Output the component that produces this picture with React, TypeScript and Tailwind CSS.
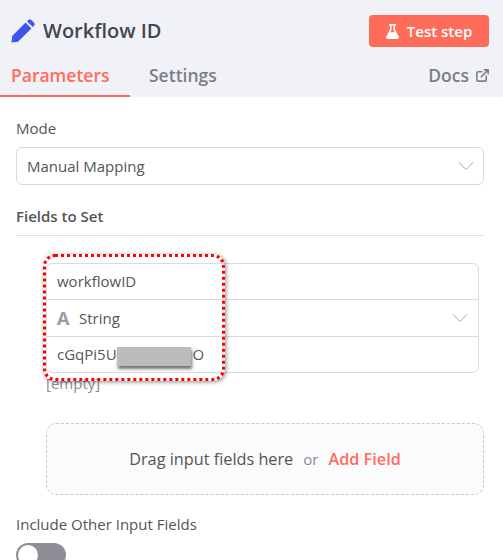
import React from 'react';
import { ChevronDown, ExternalLink } from 'lucide-react';

const PencilIcon = () => (
  <svg viewBox="0 0 24 24" className="w-[24px] h-[24px]" fill="#3f55ee">
    <path d="M0.5 23.5 L1.2 17 L14.6 3.6 L20.4 9.4 L7 22.8 Z" />
    <path d="M16 2.2 L17.4 0.9 C18.2 0.1 19.4 0.1 20.2 0.9 L23.1 3.8 C23.9 4.6 23.9 5.8 23.1 6.6 L21.8 8 Z" />
  </svg>
);

const FlaskIcon = () => (
  <svg viewBox="0 0 13 15" className="w-[13px] h-[15px]" fill="white">
    <path
      fillRule="evenodd"
      d="M3 0h7v1.5H9v4l3.7 7c.6 1.2-.2 2.5-1.5 2.5H1.8C.5 15-.3 13.700.3 12.500L4 5.500v-4H3zM5.500 1.500h2v4.400l1.300 2.400H4.200l1.300-2.400z"
    />
  </svg>
);

const StringIcon = () => (
  <span className="text-[18px] font-bold text-[#9a9ca6] leading-none w-[22px]">A</span>
);

export default function App() {
  return (
    <div className="w-[503px] h-[560px] overflow-hidden bg-white font-['Open_Sans',sans-serif] text-[15px] text-[#555]">
      <div className="h-[97px] bg-[#f0f2f8] relative">
        <div className="flex items-center justify-between pl-[11px] pr-[14px] pt-[15px]">
          <div className="flex items-center gap-[8px]">
            <PencilIcon />
            <span className="text-[20px] font-semibold text-[#44464d]">Workflow ID</span>
          </div>
          <button className="w-[120px] h-[32px] rounded-[4px] bg-[#ff6d5a] text-white text-[15px] font-semibold flex items-center justify-center gap-[8px]">
            <FlaskIcon />
            Test step
          </button>
        </div>
        <div className="flex items-end justify-between pr-[13px] mt-[4px] h-[46px]">
          <div className="flex h-full items-end">
            <div className="w-[130px] h-full pl-[11px] pt-[4px] flex items-center border-b-2 border-[#ff6d5a] text-[#ff6d5a] text-[17.5px] font-semibold">
              Parameters
            </div>
            <div className="ml-[19px] h-full flex items-center pt-[4px] pb-[2px] text-[#7c7e87] text-[17.5px] font-semibold">
              Settings
            </div>
          </div>
          <div className="h-full flex items-center gap-[6px] pt-[4px] pb-[2px] text-[#7c7e87] text-[17.5px] font-semibold">
            Docs
            <ExternalLink size={15} strokeWidth={2.5} />
          </div>
        </div>
      </div>

      <div className="px-[16px] pr-[19px]">
        <div className="pt-[21px] leading-[20px] text-[#555]">Mode</div>
        <div className="mt-[9px] h-[38px] border border-[#d7dae6] rounded-[6px] pl-[10px] pr-[3px] flex items-center justify-between">
          <span>Manual Mapping</span>
          <ChevronDown size={28} strokeWidth={0.8} className="text-[#9a9ca6]" />
        </div>
        <div className="mt-[21px] pb-[9px] leading-[20px] font-semibold border-b border-[#dfe1ea] text-[#555]">
          Fields to Set
        </div>

        <div className="relative ml-[30px] mt-[27px] mr-[5px]">
          <div className="border border-[#d7dae6] rounded-[6px]">
            <div className="h-[36px] pl-[10px] flex items-center border-b border-[#d7dae6]">workflowID</div>
            <div className="h-[37px] pl-[10px] pr-[4px] flex items-center justify-between border-b border-[#d7dae6]">
              <span className="flex items-center">
                <StringIcon />
                String
              </span>
              <ChevronDown size={28} strokeWidth={0.8} className="text-[#9a9ca6]" />
            </div>
            <div className="h-[35px] pl-[10px] flex items-center">
              cGqPi5U<span className="inline-block w-[76px]" />O
            </div>
          </div>
          {/* redaction + highlight drawn over the screenshot */}
          <div className="absolute left-[71px] top-[84px] w-[74px] h-[19px] bg-[#bcbcbc] shadow-[1px_3px_3px_rgba(0,0,0,0.55)]" />
          <div className="absolute -left-[3px] -top-[9px] w-[182px] h-[127px] border-[3px] border-dotted border-[#ff0000] rounded-[12px] shadow-[1px_1px_4px_rgba(0,0,0,0.45)]" />
        </div>

        <div className="ml-[30px] leading-[20px] text-[#8b8d96]">[empty]</div>

        <div className="ml-[30px] mt-[30px] h-[72px] border border-dashed border-[#c6c8d6] rounded-[10px] bg-[#fafbfd] flex items-center justify-center text-[16.25px]">
          <span className="text-[#555]">Drag input fields here</span>
          <span className="mx-[10px] text-[#8b8d96] text-[15px]">or</span>
          <span className="text-[#ff6d5a] font-semibold">Add Field</span>
        </div>

        <div className="mt-[19px] leading-[20px]">Include Other Input Fields</div>
        <div className="mt-[9px] w-[50px] h-[24px] rounded-full bg-[#8e8f96] p-[2px]">
          <div className="w-[20px] h-[20px] rounded-full bg-white" />
        </div>
      </div>
    </div>
  );
}
